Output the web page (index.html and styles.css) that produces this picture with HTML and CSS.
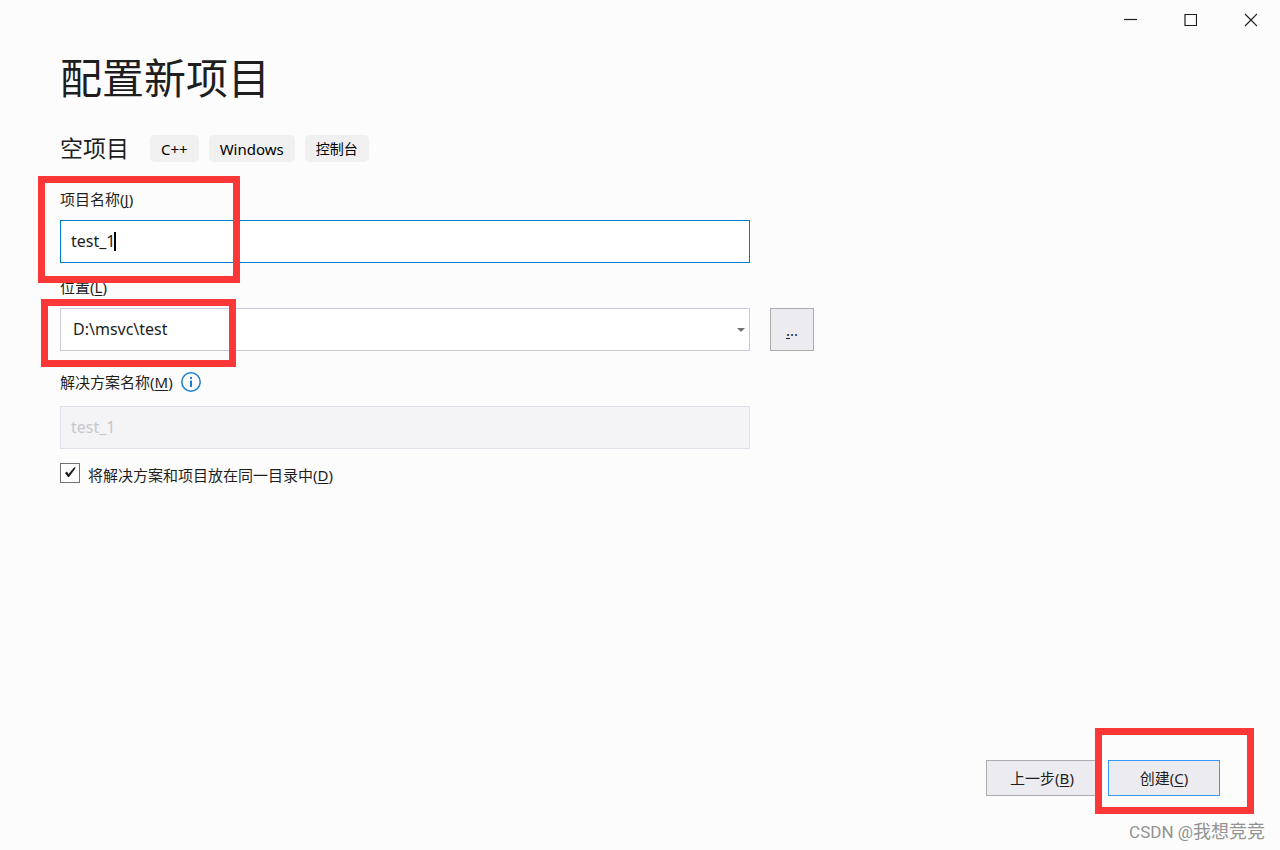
FILE: index.html
```html
<!DOCTYPE html>
<html lang="zh-CN">

<head>
    <meta charset="UTF-8">
    <meta name="viewport" content="width=device-width, initial-scale=1.0">
    <title>配置新项目</title>
    <link rel="stylesheet" href="styles.css">
</head>

<body>
    <header class="titlebar">
        <button type="button" aria-label="最小化">
            <svg width="14" height="14" viewBox="0 0 14 14"><path d="M1 6.5H14" /></svg>
        </button>
        <button type="button" aria-label="最大化">
            <svg width="14" height="14" viewBox="0 0 14 14"><path d="M2 1.5H13.5V12.5H2Z" /></svg>
        </button>
        <button type="button" aria-label="关闭">
            <svg width="14" height="14" viewBox="0 0 14 14"><path d="M2 1L14 13M14 1L2 13" /></svg>
        </button>
    </header>

    <main>
        <h1>配置新项目</h1>

        <div class="template">
            <h2>空项目</h2>
            <ul class="tags">
                <li>C++</li>
                <li>Windows</li>
                <li class="is-cjk">控制台</li>
            </ul>
        </div>

        <form id="project">
            <div class="field">
                <label for="name">项目名称(<u>J</u>)</label>
                <div class="control">
                    <input type="text" id="name" value="test_1">
                    <span class="caret"></span>
                </div>
                <span class="mark mark-name"></span>
            </div>

            <div class="field">
                <label for="location">位置(<u>L</u>)</label>
                <div class="control">
                    <select id="location">
                        <option>D:\msvc\test</option>
                    </select>
                    <svg class="arrow" width="8" height="4" viewBox="0 0 8 4"><path d="M0 0H8L4 4Z" /></svg>
                    <span class="mark mark-location"></span>
                </div>
                <button type="button" class="browse" aria-label="浏览"><u>.</u>..</button>
            </div>

            <div class="field is-solution">
                <div class="label-row">
                    <label for="solution">解决方案名称(<u>M</u>)</label>
                    <svg class="info" width="20" height="20" viewBox="0 0 20 20">
                        <circle cx="10" cy="10" r="9.2" />
                        <path d="M10 8.5V15M10 5V7" />
                    </svg>
                </div>
                <div class="control">
                    <input type="text" id="solution" value="test_1" disabled>
                </div>
            </div>

            <div class="check">
                <input type="checkbox" id="same-dir" checked>
                <svg class="tick" width="20" height="20" viewBox="0 0 20 20"><path d="M5 10L7 8.5L8.5 11L14 4.5L15.5 4L15 6L9 14H8Z" /></svg>
                <label for="same-dir">将解决方案和项目放在同一目录中(<u>D</u>)</label>
            </div>
        </form>
    </main>

    <footer>
        <button type="button">上一步(<u>B</u>)</button>
        <div class="create">
            <button type="submit" form="project" class="is-default">创建(<u>C</u>)</button>
            <span class="mark mark-create"></span>
        </div>
    </footer>

    <p class="watermark"><span>CSDN @</span>我想竞竞</p>
</body>

</html>
```

FILE: styles.css
```css
*,
*::before,
*::after {
    box-sizing: border-box;
    margin: 0;
    padding: 0;
}

body {
    font-family: 'Noto Sans', 'Noto Sans CJK SC', sans-serif;
    font-size: 15px;
    line-height: 22px;
    color: #1e1e1e;
    background: #fcfcfc;
    min-height: 100vh;
    display: flex;
    flex-direction: column;
}

button,
input,
select {
    font: inherit;
    color: inherit;
    border-radius: 0;
}

u {
    text-decoration-thickness: 1px;
    text-underline-offset: 2px;
}

.titlebar {
    display: flex;
    justify-content: flex-end;

    & button {
        display: grid;
        place-content: center;
        width: 60px;
        height: 40px;
        border: 0;
        background: none;
    }

    & path {
        fill: none;
        stroke: #1e1e1e;
        stroke-width: 1.2;
    }
}

main {
    flex: 1;
    padding: 8px 60px 0;
}

h1 {
    font-size: 42px;
    line-height: 60px;
    font-weight: 400;
}

.template {
    display: flex;
    align-items: center;
    gap: 21px;
    margin-top: 27px;

    & h2 {
        font-size: 23px;
        line-height: 27px;
        font-weight: 400;
    }
}

.tags {
    display: flex;
    gap: 10px;
    list-style: none;

    & li {
        height: 27px;
        padding: 0 11px;
        line-height: 28px;
        border-radius: 5px;
        color: #000;
        background: #f0f0f0;
    }

    & .is-cjk {
        font-size: 14px;
    }
}

form {
    max-width: 754px;
    margin-top: 26px;
}

.field {
    display: grid;
    grid-template-columns: 1fr 44px;
    column-gap: 20px;
    row-gap: 10px;
    position: relative;
    margin-bottom: 13px;

    & > label,
    & .label-row {
        grid-column: 1 / -1;
    }

    &.is-solution {
        margin-top: 20px;
        row-gap: 13px;
    }
}

.label-row {
    display: flex;
    align-items: center;
    gap: 8px;
}

.info {
    fill: none;
    stroke: #1c7fd0;
    stroke-width: 2;

    & circle {
        stroke-width: 1.5;
    }
}

.control {
    position: relative;

    & input,
    & select {
        display: block;
        width: 100%;
        height: 43px;
        padding: 0 10px 2px;
        border: 1px solid #ccc9dc;
        background: #fff;
        outline: 0;
        font-size: 16px;
    }

    & select {
        appearance: none;
        padding: 0 12px 2px;
    }

    & #name {
        border-color: #007acc;
    }

    & input:disabled {
        color: #c6c7cb;
        border-color: #e0e0e8;
        background: #f4f4f7;
    }
}

.caret {
    position: absolute;
    left: 54px;
    top: 12px;
    width: 2px;
    height: 19px;
    background: #000;
}

.arrow {
    position: absolute;
    right: 5px;
    top: 20px;
    fill: #717171;
    pointer-events: none;
}

.browse,
footer button {
    border: 1px solid #acacac;
    background: #ececf0;
}

.check {
    display: flex;
    gap: 8px;
    position: relative;
    margin-top: 14px;

    & input {
        appearance: none;
        width: 20px;
        height: 20px;
        border: 1px solid #717171;
        background: #fff;
    }

    & label {
        padding-top: 1px;
    }
}

.tick {
    position: absolute;
    left: 0;
    top: 0;
    fill: #1e1e1e;
    visibility: hidden;
    pointer-events: none;

    input:checked + & {
        visibility: visible;
    }
}

footer {
    display: flex;
    justify-content: flex-end;
    gap: 10px;
    padding: 0 60px 54px;

    & button {
        width: 112px;
        height: 36px;
    }

    & .is-default {
        border-color: #3399ff;
    }
}

.create {
    position: relative;
}

/* red highlight frames */
.mark {
    position: absolute;
    z-index: 1;
    border: 7px solid #fc3737;
    pointer-events: none;
}

.mark-name {
    left: -22px;
    top: -12px;
    width: 202px;
    height: 107px;
}

.mark-location {
    left: -19px;
    top: -9px;
    width: 195px;
    height: 68px;
}

.mark-create {
    inset: -32px -34px -18px -13px;
}

.watermark {
    position: absolute;
    right: 15px;
    bottom: 6px;
    font-size: 18px;
    line-height: 24px;
    color: #929292;

    & span {
        font-family: Roboto, sans-serif;
        font-size: 17px;
    }
}
```
